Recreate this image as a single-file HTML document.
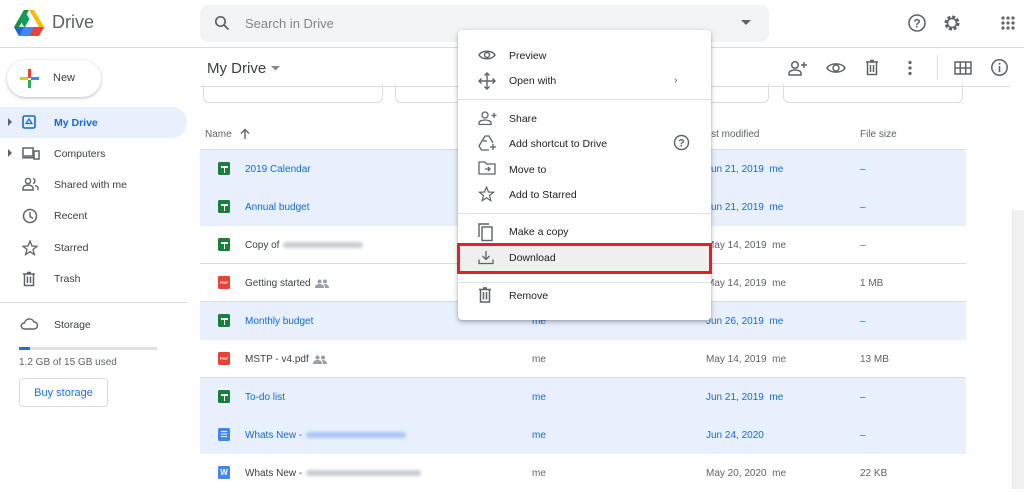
<!DOCTYPE html>
<html><head><meta charset="utf-8"><style>
*{box-sizing:border-box;margin:0;padding:0}
body{width:1024px;height:489px;overflow:hidden;background:#fff;font-family:"Liberation Sans",Arial,sans-serif;color:#3c4043;position:relative;font-size:11px}
.abs{position:absolute}
.hdr{left:0;top:0;width:1024px;height:48px;border-bottom:1px solid #dadce0}
.search{left:200px;top:5px;width:569px;height:37px;background:#f1f3f4;border-radius:8px}
.nav{left:0;height:31px;width:187px;display:flex;align-items:center;font-size:10.5px;color:#3c4043}
.nav .ic{position:absolute;left:22px;top:8px}
.nav span{position:absolute;left:54px;top:10px}
.row{left:200px;width:766px;height:38px;border-bottom:1px solid #dadce0;font-size:10px}
.row.sel{background:#e8f0fe;border-bottom-color:#e8f0fe;color:#1967d2}
.row .n{position:absolute;left:45px;top:14px}
.row .o{position:absolute;left:332px;top:14px;color:#5f6368}
.row.sel .o,.row.sel .d{color:#1967d2}
.row .d{position:absolute;left:506px;top:14px;color:#5f6368}
.row .s{position:absolute;left:660px;top:14px;color:#5f6368}
.row.sel .s{color:#1967d2}
.fi{position:absolute;left:18px;top:12px;width:12px;height:13px;border-radius:1.5px}
.sh{background:#188038}.sh:after{content:"";position:absolute;left:2.5px;top:4px;width:7px;height:1.5px;background:#fff}
.sh:before{content:"";position:absolute;left:5.5px;top:4px;width:1.5px;height:7px;background:#fff}
.pdf{background:#ea4335;color:#fff;font-size:4px;font-weight:bold;text-align:center;line-height:13px}
.doc{background:#4285f4}.doc:after{content:"";position:absolute;left:3px;top:3px;width:6px;height:1.2px;background:#fff;box-shadow:0 2.5px 0 #fff,0 5px 0 #fff}
.wd{background:#4285f4;color:#fff;font-size:8px;font-weight:bold;text-align:center;line-height:13px}
.blur{display:inline-block;height:6px;border-radius:3px;background:#c9ccd1;filter:blur(1.5px);vertical-align:middle;margin-left:4px}
.sel .blur{background:#a9c4f5}
.menu{left:458px;top:30px;width:253px;height:290px;background:#fff;border-radius:4px;box-shadow:0 2px 6px rgba(0,0,0,.25),0 1px 2px rgba(0,0,0,.15)}
.mi{position:absolute;left:51px;font-size:10.5px;color:#202124}
.mic{position:absolute;left:20px}
.dv{position:absolute;left:0;width:253px;height:1px;background:#e0e0e0}
.card{top:84px;height:19px;border:1px solid #dadce0;border-top:none;border-radius:0 0 6px 6px}
.ppl{vertical-align:middle;margin-left:4px}
</style></head><body>
<div class="abs hdr"></div>
<svg class="abs" style="left:14px;top:10px" width="30" height="26" viewBox="0 0 30 26">
<polygon points="10,0 20,0 30,17 25,17 15,0" fill="#fbbc04"/>
<polygon points="10,0 15,0 5,17 0,17" fill="#1e8e3e"/><polygon points="10,0 15.5,9 10.5,17.5 5,9" fill="#0f9d58"/>
<polygon points="0,17 5,26 25,26 30,17" fill="#4285f4"/><polygon points="20,17 30,17 25,26 15,26" fill="#ea4335"/>
<polygon points="0,17 10,17 5,26" fill="#1967d2"/>
</svg>
<div class="abs" style="left:52px;top:12px;font-size:18px;color:#5f6368">Drive</div>
<div class="abs search"></div>
<svg class="abs" style="left:214px;top:15px" width="16" height="16" viewBox="0 0 16 16"><circle cx="6.5" cy="6.5" r="4.7" fill="none" stroke="#5f6368" stroke-width="1.7"/><line x1="10" y1="10" x2="14.5" y2="14.5" stroke="#5f6368" stroke-width="1.8"/></svg>
<div class="abs" style="left:245px;top:16px;font-size:13px;color:#80868b">Search in Drive</div>
<svg class="abs" style="left:741px;top:20px" width="10" height="6"><polygon points="0,0 10,0 5,5" fill="#5f6368"/></svg>
<svg class="abs" style="left:907px;top:13px" width="20" height="20" viewBox="0 0 20 20"><circle cx="10" cy="10" r="8" fill="none" stroke="#5f6368" stroke-width="1.6"/><text x="10" y="14.5" text-anchor="middle" font-size="12" font-family="Liberation Sans" font-weight="bold" fill="#5f6368">?</text></svg>
<svg class="abs" style="left:942px;top:13px" width="20" height="20" viewBox="0 0 20 20"><circle cx="10" cy="10" r="6" fill="none" stroke="#5f6368" stroke-width="3" stroke-dasharray="3 1.7"/><circle cx="10" cy="10" r="4.5" fill="none" stroke="#5f6368" stroke-width="1.6"/></svg>
<svg class="abs" style="left:1001px;top:16px" width="14" height="14"><g fill="#5f6368"><circle cx="2" cy="2" r="1.6"/><circle cx="7" cy="2" r="1.6"/><circle cx="12" cy="2" r="1.6"/><circle cx="2" cy="7" r="1.6"/><circle cx="7" cy="7" r="1.6"/><circle cx="12" cy="7" r="1.6"/><circle cx="2" cy="12" r="1.6"/><circle cx="7" cy="12" r="1.6"/><circle cx="12" cy="12" r="1.6"/></g></svg>
<div class="abs" style="left:7px;top:60px;width:94px;height:37px;border-radius:19px;box-shadow:0 1px 3px rgba(60,64,67,.35);background:#fff"></div>
<svg class="abs" style="left:19px;top:68px" width="20" height="20"><rect x="9" y="1" width="3" height="9" fill="#ea4335"/><rect x="12" y="9" width="8" height="3" fill="#4285f4"/><rect x="9" y="12" width="3" height="8" fill="#34a853"/><rect x="1" y="9" width="8" height="3" fill="#fbbc04"/></svg>
<div class="abs" style="left:53px;top:72px;font-size:11px;color:#3c4043">New</div>
<div class="abs" style="left:0;top:107px;width:187px;height:31px;background:#e8f0fe;border-radius:0 16px 16px 0"></div>
<div class="abs" style="left:8px;top:118px;width:0;height:0;border-left:4px solid #5f6368;border-top:4px solid transparent;border-bottom:4px solid transparent"></div>
<div class="abs" style="left:8px;top:149px;width:0;height:0;border-left:4px solid #5f6368;border-top:4px solid transparent;border-bottom:4px solid transparent"></div>
<div class="abs nav" style="top:107px;color:#1967d2;font-weight:bold"><svg class="ic" width="14" height="14" style="top:8px"><rect x="1" y="1" width="12" height="12" rx="1.5" fill="none" stroke="#1967d2" stroke-width="1.6"/><polygon points="7,4 10,8.5 4,8.5" fill="none" stroke="#1967d2" stroke-width="1.2"/></svg><span>My Drive</span></div>
<div class="abs nav" style="top:138px"><svg class="ic" width="18" height="14"><rect x="1" y="2" width="10" height="8" fill="none" stroke="#5f6368" stroke-width="1.5"/><rect x="0" y="11" width="12" height="1.5" fill="#5f6368"/><rect x="12" y="5" width="5" height="8" fill="none" stroke="#5f6368" stroke-width="1.5"/></svg><span>Computers</span></div>
<div class="abs nav" style="top:169px"><svg class="ic" width="18" height="14"><circle cx="6" cy="4" r="2.6" fill="none" stroke="#5f6368" stroke-width="1.4"/><path d="M1 13 v-2 c0-2 3-3 5-3 s5 1 5 3 v2z" fill="none" stroke="#5f6368" stroke-width="1.4"/><path d="M11 1.5 a2.6 2.6 0 0 1 0 5 M13 8.5 c2 .5 3 1.5 3 2.5 v2" fill="none" stroke="#5f6368" stroke-width="1.4"/></svg><span>Shared with me</span></div>
<div class="abs nav" style="top:200px"><svg class="ic" width="16" height="16"><circle cx="8" cy="8" r="6.5" fill="none" stroke="#5f6368" stroke-width="1.5"/><path d="M8 4 v4.5 l3 2" fill="none" stroke="#5f6368" stroke-width="1.4"/></svg><span>Recent</span></div>
<div class="abs nav" style="top:232px"><svg class="ic" width="16" height="16"><polygon points="8,1 10,6 15,6.3 11,9.5 12.4,14.5 8,11.7 3.6,14.5 5,9.5 1,6.3 6,6" fill="none" stroke="#5f6368" stroke-width="1.3"/></svg><span>Starred</span></div>
<div class="abs nav" style="top:263px"><svg class="ic" width="14" height="16"><path d="M1 3 h12 M5 1.5 h4 M2.5 3 v11.5 h9 V3 M5.5 5.5 v6.5 M8.5 5.5 v6.5" fill="none" stroke="#5f6368" stroke-width="1.5"/></svg><span>Trash</span></div>
<div class="abs" style="left:0;top:302px;width:187px;height:1px;background:#dadce0"></div>
<div class="abs nav" style="top:309px"><svg class="ic" width="20" height="14" style="left:19px"><path d="M5 12 h10 a3.5 3.5 0 0 0 0-7 a5 5 0 0 0-9.5 1 a3 3 0 0 0-.5 6z" fill="none" stroke="#5f6368" stroke-width="1.4"/></svg><span>Storage</span></div>
<div class="abs" style="left:19px;top:347px;width:138px;height:3px;background:#e0e0e0"></div>
<div class="abs" style="left:19px;top:347px;width:11px;height:3px;background:#1a73e8"></div>
<div class="abs" style="left:19px;top:357px;font-size:10px;color:#5f6368">1.2 GB of 15 GB used</div>
<div class="abs" style="left:19px;top:378px;width:89px;height:29px;border:1px solid #dadce0;border-radius:4px;color:#1a73e8;font-size:11px;text-align:center;line-height:29px">Buy storage</div>
<div class="abs" style="left:207px;top:60px;font-size:15px;color:#3c4043">My Drive</div>
<svg class="abs" style="left:271px;top:66px" width="9" height="5"><polygon points="0,0 9,0 4.5,4.5" fill="#80868b"/></svg>
<div class="abs" style="left:200px;top:86px;width:810px;height:1px;background:#dadce0"></div>
<div class="abs card" style="left:203px;width:180px"></div>
<div class="abs card" style="left:395px;width:180px"></div>
<div class="abs card" style="left:589px;width:180px"></div>
<div class="abs card" style="left:783px;width:180px"></div>
<svg class="abs" style="left:788px;top:60px" width="20" height="16"><circle cx="7" cy="5" r="3.3" fill="none" stroke="#5f6368" stroke-width="1.5"/><path d="M1 15 v-1.5 c0-2.5 3-3.5 6-3.5 s6 1 6 3.5 V15z" fill="none" stroke="#5f6368" stroke-width="1.5"/><path d="M16 2 v6 M13 5 h6" stroke="#5f6368" stroke-width="1.5"/></svg>
<svg class="abs" style="left:826px;top:61px" width="20" height="14"><path d="M1 7 C4 1.5 16 1.5 19 7 C16 12.5 4 12.5 1 7z" fill="none" stroke="#5f6368" stroke-width="1.5"/><circle cx="10" cy="7" r="3" fill="none" stroke="#5f6368" stroke-width="1.5"/></svg>
<svg class="abs" style="left:865px;top:59px" width="14" height="17"><path d="M1 3 h12 M5 1.5 h4 M2.5 3 v12.5 h9 V3 M5.5 6 v7 M8.5 6 v7" fill="none" stroke="#5f6368" stroke-width="1.5"/></svg>
<svg class="abs" style="left:908px;top:60px" width="4" height="16"><circle cx="2" cy="2.5" r="1.6" fill="#5f6368"/><circle cx="2" cy="8" r="1.6" fill="#5f6368"/><circle cx="2" cy="13.5" r="1.6" fill="#5f6368"/></svg>
<div class="abs" style="left:937px;top:55px;width:1px;height:25px;background:#dadce0"></div>
<svg class="abs" style="left:954px;top:61px" width="18" height="14"><rect x="1" y="1" width="16" height="12" fill="none" stroke="#5f6368" stroke-width="1.5"/><path d="M1 7 h16 M6.3 1 v12 M11.7 1 v12" stroke="#5f6368" stroke-width="1.5"/></svg>
<svg class="abs" style="left:990px;top:58px" width="19" height="19"><circle cx="9.5" cy="9.5" r="7.7" fill="none" stroke="#5f6368" stroke-width="1.5"/><rect x="8.7" y="8" width="1.6" height="6" fill="#5f6368"/><circle cx="9.5" cy="5.7" r="1" fill="#5f6368"/></svg>
<div class="abs" style="left:205px;top:129px;font-size:10px;color:#5f6368">Name</div>
<svg class="abs" style="left:240px;top:128px" width="10" height="12"><path d="M5 11 V2 M1 5.5 L5 1.5 L9 5.5" fill="none" stroke="#5f6368" stroke-width="1.4"/></svg>
<div class="abs" style="left:700px;top:129px;font-size:10px;color:#5f6368">Last modified</div>
<div class="abs" style="left:860px;top:129px;font-size:10px;color:#5f6368">File size</div>
<div class="abs" style="left:200px;top:149px;width:766px;height:1px;background:#dadce0"></div>
<div class="abs row sel" style="top:150px"><div class="fi sh"></div><div class="n">2019 Calendar</div><div class="o">me</div><div class="d">Jun 21, 2019&nbsp; me</div><div class="s">–</div></div>
<div class="abs row sel" style="top:188px"><div class="fi sh"></div><div class="n">Annual budget</div><div class="o">me</div><div class="d">Jun 21, 2019&nbsp; me</div><div class="s">–</div></div>
<div class="abs row" style="top:226px"><div class="fi sh"></div><div class="n">Copy of<span class="blur" style="width:80px"></span></div><div class="o">me</div><div class="d">May 14, 2019&nbsp; me</div><div class="s">–</div></div>
<div class="abs row" style="top:264px"><div class="fi pdf">PDF</div><div class="n">Getting started<svg class="ppl" width="14" height="9"><circle cx="4.5" cy="2.5" r="2" fill="#9aa0a6"/><circle cx="10" cy="2.5" r="2" fill="#9aa0a6"/><path d="M0 9 c0-3 2-4 4.5-4 s4.5 1 4.5 4z M9 5 c3 0 5 1 5 4 h-4z" fill="#9aa0a6"/></svg></div><div class="o">me</div><div class="d">May 14, 2019&nbsp; me</div><div class="s">1 MB</div></div>
<div class="abs row sel" style="top:302px"><div class="fi sh"></div><div class="n">Monthly budget</div><div class="o">me</div><div class="d">Jun 26, 2019&nbsp; me</div><div class="s">–</div></div>
<div class="abs row" style="top:340px"><div class="fi pdf">PDF</div><div class="n">MSTP - v4.pdf<svg class="ppl" width="14" height="9"><circle cx="4.5" cy="2.5" r="2" fill="#9aa0a6"/><circle cx="10" cy="2.5" r="2" fill="#9aa0a6"/><path d="M0 9 c0-3 2-4 4.5-4 s4.5 1 4.5 4z M9 5 c3 0 5 1 5 4 h-4z" fill="#9aa0a6"/></svg></div><div class="o">me</div><div class="d">May 14, 2019&nbsp; me</div><div class="s">13 MB</div></div>
<div class="abs row sel" style="top:378px"><div class="fi sh"></div><div class="n">To-do list</div><div class="o">me</div><div class="d">Jun 21, 2019&nbsp; me</div><div class="s">–</div></div>
<div class="abs row sel" style="top:416px"><div class="fi doc"></div><div class="n">Whats New -<span class="blur" style="width:100px"></span></div><div class="o">me</div><div class="d">Jun 24, 2020</div><div class="s">–</div></div>
<div class="abs row" style="top:454px;border-bottom:none"><div class="fi wd">W</div><div class="n">Whats New -<span class="blur" style="width:115px"></span></div><div class="o">me</div><div class="d">May 20, 2020&nbsp; me</div><div class="s">22 KB</div></div>
<div class="abs" style="left:1012px;top:210px;width:12px;height:279px;background:#f1f1f1;border-left:1px solid #e8e8e8"></div>
<div class="abs menu">
<svg class="mic" style="top:19px" width="18" height="12"><path d="M1 6 C4 1 14 1 17 6 C14 11 4 11 1 6z" fill="none" stroke="#5f6368" stroke-width="1.4"/><circle cx="9" cy="6" r="2.5" fill="none" stroke="#5f6368" stroke-width="1.4"/></svg>
<div class="mi" style="top:20px">Preview</div>
<svg class="mic" style="top:42px" width="18" height="18"><path d="M9 1 v16 M1 9 h16 M6.5 3.5 L9 1 L11.5 3.5 M6.5 14.5 L9 17 L11.5 14.5 M3.5 6.5 L1 9 L3.5 11.5 M14.5 6.5 L17 9 L14.5 11.5" fill="none" stroke="#5f6368" stroke-width="1.4"/></svg>
<div class="mi" style="top:45px">Open with</div>
<div class="mi" style="left:216px;top:44px;color:#5f6368">›</div>
<div class="dv" style="top:69px"></div>
<svg class="mic" style="top:81px" width="20" height="14"><circle cx="7" cy="4" r="3" fill="none" stroke="#5f6368" stroke-width="1.3"/><path d="M1 13.5 v-1.5 c0-2 3-3 6-3 s6 1 6 3 v1.5z" fill="none" stroke="#5f6368" stroke-width="1.3"/><path d="M16 2 v5 M13.5 4.5 h5" stroke="#5f6368" stroke-width="1.3"/></svg>
<div class="mi" style="top:83px">Share</div>
<svg class="mic" style="top:105px" width="20" height="16"><path d="M7 1 L1 11 L3.5 15 H11 M7 1 h4 l4 7 M5 6 l4 0" fill="none" stroke="#5f6368" stroke-width="1.3"/><path d="M15 9 v6 M12 12 h6" stroke="#5f6368" stroke-width="1.3"/></svg>
<div class="mi" style="top:108px">Add shortcut to Drive</div>
<svg class="abs" style="left:215px;top:104px" width="17" height="17"><circle cx="8.5" cy="8.5" r="7" fill="none" stroke="#5f6368" stroke-width="1.4"/><text x="8.5" y="12.5" text-anchor="middle" font-size="11" font-family="Liberation Sans" font-weight="bold" fill="#5f6368">?</text></svg>
<svg class="mic" style="top:131px" width="18" height="14"><path d="M1 1 h6 l1.5 2 H17 V13 H1z" fill="none" stroke="#5f6368" stroke-width="1.3"/><path d="M7 8 h5 M10 6 l2 2 l-2 2" fill="none" stroke="#5f6368" stroke-width="1.3"/></svg>
<div class="mi" style="top:134px">Move to</div>
<svg class="mic" style="top:156px" width="17" height="16"><polygon points="8.5,1 10.5,6 15.5,6.3 11.5,9.5 12.8,14.7 8.5,11.9 4.2,14.7 5.5,9.5 1.5,6.3 6.5,6" fill="none" stroke="#5f6368" stroke-width="1.2"/></svg>
<div class="mi" style="top:159px">Add to Starred</div>
<div class="dv" style="top:183px"></div>
<svg class="mic" style="top:193px" width="16" height="19"><path d="M1 14 V1 h10" fill="none" stroke="#5f6368" stroke-width="1.4"/><rect x="4" y="4" width="10" height="13.5" fill="none" stroke="#5f6368" stroke-width="1.4"/></svg>
<div class="mi" style="top:196px">Make a copy</div>
<div class="abs" style="left:-1px;top:213px;width:255px;height:31px;background:#efefef;border:3px solid #e0202c"></div>
<svg class="mic" style="top:220px" width="16" height="15"><path d="M8 1 v8 M4.5 6 L8 9.5 L11.5 6 M1 9.5 v4 h14 v-4" fill="none" stroke="#5f6368" stroke-width="1.3"/></svg>
<div class="mi" style="top:222px">Download</div>
<div class="dv" style="top:252px"></div>
<svg class="mic" style="top:257px" width="14" height="16"><path d="M1 2.5 h12 M5 1 h4 M2.5 2.5 v12.5 h9 V2.5 M5.5 5 v7.5 M8.5 5 v7.5" fill="none" stroke="#5f6368" stroke-width="1.5"/></svg>
<div class="mi" style="top:260px">Remove</div>
</div>
</body></html>
